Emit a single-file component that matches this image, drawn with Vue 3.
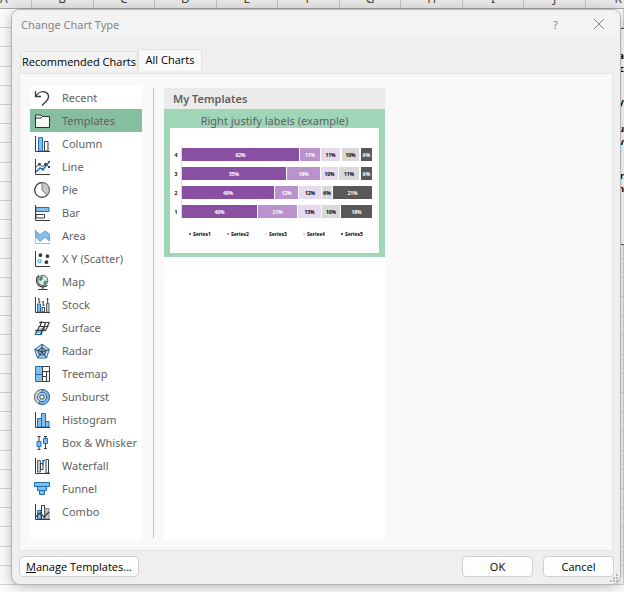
<script setup>
import { ref } from 'vue'

const K = '#3b3b3b'
const B = '#1f6fb5'
const L = '#83beec'
const G = '#c8c8c8'
const axis = { d: 'M1.5 0V15.5H16', s: K }

const types = [
  { name: 'Recent', shapes: [{ d: 'M1.5 1V6.5H7M1.8 6.2C4 2.5 8 .8 11.5 2.2C15.5 4 15.3 8.4 12.5 11L8 15.5', s: K, w: 1.3 }] },
  { name: 'Templates', shapes: [{ d: 'M1.5 2H7L8.5 3.5H15.5V14.5H1.5Z', s: '#2f2f2f', f: '#f5faf7' }, { d: 'M1.5 5H7L8.5 3.5', s: '#2f2f2f' }] },
  { name: 'Column', shapes: [{ d: 'M4.5 1.5H8.5V15H4.5Z', s: B, f: L }, { d: 'M10.5 5.5H14V15H10.5Z', s: K, f: '#fff' }, axis] },
  { name: 'Line', shapes: [{ d: 'M2 8L5.5 5L8.5 8L11.5 5L15 8', s: K }, { d: 'M2 13L6 9L9 10.5L15 3', s: B, w: 1.5 }, { d: 'M4.3 4H6.7V6.4H4.3ZM10.3 4H12.7V6.4H10.3ZM14 7H16V9H14Z', f: K }, { d: 'M8 9.5H10V11.5H8ZM14 2H16V4H14Z', f: B }, axis] },
  { name: 'Pie', shapes: [{ d: 'M15.3 8A7.3 7.3 0 1 1 8 .7A7.3 7.3 0 0 1 15.3 8Z', s: K, f: '#fff', w: 1.3 }, { d: 'M8 .7A7.3 7.3 0 0 1 13.3 13.1L8 8Z', s: '#777', f: G }] },
  { name: 'Bar', shapes: [{ d: 'M2 2.5H15V6.5H2Z', s: B, f: L }, { d: 'M2 9.5H10.5V13H2Z', s: K, f: '#fff' }, axis] },
  { name: 'Area', shapes: [{ d: 'M1.5 1V15.5H16', s: '#bbb' }, { d: 'M2 3L6 7L11 3L15.5 6V13L11 9L6 13.5L2 9Z', s: '#5aa2dc', f: L }] },
  { name: 'X Y (Scatter)', shapes: [{ d: 'M4.5 4.2A1.9 1.9 0 1 0 8.3 4.2A1.9 1.9 0 1 0 4.5 4.2ZM11.5 5.2A1.9 1.9 0 1 0 15.3 5.2A1.9 1.9 0 1 0 11.5 5.2ZM10.5 11.2A1.9 1.9 0 1 0 14.3 11.2A1.9 1.9 0 1 0 10.5 11.2Z', f: K }, { d: 'M4 10.2A1.6 1.6 0 1 0 7.2 10.2A1.6 1.6 0 1 0 4 10.2Z', s: '#2e91d8', f: '#fff' }, axis] },
  { name: 'Map', shapes: [{ d: 'M13.8 6.5A5 5 0 1 1 8.8 1.5A5 5 0 0 1 13.8 6.5Z', s: '#555', f: '#dfe9e3' }, { d: 'M6 3L9 2.5L8.5 5.5L6.5 7L5 6ZM10 7L13 6.5L12 9.5L9.5 10.5Z', f: '#2c9a58' }, { d: 'M5 1.2C2 3 1.5 8.5 4.5 11.3C7 13.6 11 13.3 13.3 11M8.8 13V15.3M4 15.5H13.5', s: K, w: 1.2 }] },
  { name: 'Stock', shapes: [{ d: 'M3.5 7H6.5V15H3.5Z', s: B, f: L }, { d: 'M8 10.5H10.5V15H8Z', s: K, f: '#fff' }, { d: 'M12.5 6.5H15V15H12.5Z', s: '#666', f: G }, { d: 'M5 1V6M4 2H5M5 5H6.5M9.2 4V9M8.2 5H9.2M9.2 8H10.5M13.7 1V6M12.7 2H13.7', s: K }, axis] },
  { name: 'Surface', shapes: [{ d: 'M2 10L7 8L11 10L8 14L2 13Z', f: L }, { d: 'M5 2.5H15.5M4.5 6.5H14.5M1 10.5H12M7.5 1L6 6.5M11.5 2L9.5 10M15.5 2L13 7M5.5 6L1 15M9.5 7L6.5 14.5M14 6L11 11', s: K, w: 1.2 }, { d: 'M1.5 14.5H8', s: B }] },
  { name: 'Radar', shapes: [{ d: 'M8 1L15.3 6.5L12.5 15H3.5L.7 6.5Z', s: B, f: '#b8dcf5' }, { d: 'M8 4.5L12 7.5L10.5 12H5.5L4 7.5Z', s: K, f: L }, { d: 'M8 8.8V1M8 8.8L15.3 6.5M8 8.8L12.5 15M8 8.8L3.5 15M8 8.8L.7 6.5', s: K }] },
  { name: 'Treemap', shapes: [{ d: 'M1.5 .5H8.5V15.5H1.5Z', s: B, f: L }, { d: 'M1.5 8.5H8.5', s: B }, { d: 'M8.5 .5H15.5V15.5H8.5ZM8.5 5.5H15.5M12.5 5.5V15.5M8.5 10.5H12.5', s: K }] },
  { name: 'Sunburst', shapes: [{ d: 'M15.5 8A7.5 7.5 0 1 1 8 .5A7.5 7.5 0 0 1 15.5 8Z', s: '#555', f: '#ddd' }, { d: 'M8 .5A7.5 7.5 0 1 1 5 14.9L8 8Z', s: B, f: L }, { d: 'M12.7 8A4.7 4.7 0 1 1 8 3.3A4.7 4.7 0 0 1 12.7 8Z', s: '#2d5f8c', f: '#b8dcf5' }, { d: 'M10.2 8A2.2 2.2 0 1 1 8 5.8A2.2 2.2 0 0 1 10.2 8Z', s: K, f: '#fff' }] },
  { name: 'Histogram', shapes: [{ d: 'M3.5 6.5H7.5V15H3.5ZM7.5 1.5H11.5V15H7.5ZM11.5 9.5H15V15H11.5Z', s: B, f: L }, axis] },
  { name: 'Box & Whisker', shapes: [{ d: 'M3.5 1.5H6.5M5 1.5V14.5M3.5 14.5H6.5M10 1.5H13M11.5 1.5V13.5M10 13.5H13', s: K }, { d: 'M3 6.5H7V11.5H3ZM9.5 3.5H13.5V8.5H9.5Z', s: B, f: L }] },
  { name: 'Waterfall', shapes: [{ d: 'M3.5 2.5H6.5V14H3.5Z', s: '#666', f: G }, { d: 'M6.5 5.5H9V11.5H6.5Z', s: K, f: '#fff' }, { d: 'M9 7.5V2.5H11', s: B, w: 1.4 }, { d: 'M12 1.5H14.5V15H12Z', s: K, f: '#fff' }, axis] },
  { name: 'Funnel', shapes: [{ d: 'M.5 1.5H15.5V5.5H.5ZM3.5 5.5H12.5V9.5H3.5ZM5.5 9.5H10.5V13.5H5.5Z', s: B, f: L }] },
  { name: 'Combo', shapes: [{ d: 'M3.5 6.5H7V15H3.5Z', s: B, f: L }, { d: 'M7.5 1.5H10.5V15H7.5Z', s: K, f: '#fff' }, { d: 'M11 4.5H15V15H11Z', s: '#888', f: G }, { d: 'M2 13L6 9L10 13L15 8', s: K, w: 1.3 }, axis] }
]
const selected = ref('Templates')

const fills = ['#884fa2', '#ba92cc', '#e8daee', '#d9d9d9', '#595959']
const inks = ['#fff', '#fff', '#000', '#000', '#fff']
const rows = [
  { n: 4, x: [12, 130, 151, 172, 191], e: [129, 150, 170, 189, 202], v: [62, 11, 11, 10, 6] },
  { n: 3, x: [12, 117, 151, 169, 191], e: [116, 150, 168, 189, 202], v: [55, 18, 10, 11, 6] },
  { n: 2, x: [12, 105, 129, 152, 163], e: [104, 128, 151, 162, 202], v: [49, 12, 12, 6, 21] },
  { n: 1, x: [12, 88, 128, 152, 171], e: [87, 127, 151, 170, 202], v: [40, 21, 13, 10, 18] }
]

const columns = ['A', 'B', 'C', 'D', 'E', 'F', 'G', 'H', 'I', 'J', 'K']
const notes = [
  { t: 'a', y: 49 }, { t: 'c', y: 62 }, { t: 'y', y: 95 }, { t: 'u', y: 122 },
  { t: 'v', y: 135 }, { t: 'r', y: 169 }, { t: 'n', y: 182 }
]
</script>

<template>
  <div class="screen">
    <div class="sheet" aria-hidden="true">
      <div class="heads">
        <span v-for="c in columns" :key="c"><b>{{ c }}</b></span>
      </div>
      <div class="cells">
        <div v-for="r in 30" :key="r" class="row"><i v-for="c in columns" :key="c"></i></div>
      </div>
      <div class="note">
        <span v-for="n in notes" :key="n.y" :style="{ top: n.y - 28 + 'px' }">{{ n.t }}</span>
      </div>
    </div>

    <section class="dialog" role="dialog" aria-labelledby="title">
      <header class="titlebar">
        <h1 id="title">Change Chart Type</h1>
        <button class="tool" type="button">?</button>
        <button class="tool" type="button" aria-label="Close">
          <svg width="12" height="12" viewBox="0 0 12 12"><path d="M1 1L11 11M11 1L1 11" stroke="#858585" fill="none" /></svg>
        </button>
      </header>

      <div class="tabs" role="tablist">
        <button class="tab" type="button" role="tab" aria-selected="false">Recommended Charts</button>
        <button class="tab active" type="button" role="tab" aria-selected="true">All Charts</button>
      </div>

      <main class="panel">
        <nav class="types">
          <button
            v-for="t in types"
            :key="t.name"
            type="button"
            class="type"
            :class="{ selected: selected === t.name }"
            @click="selected = t.name"
          >
            <svg width="16" height="16" viewBox="0 0 16 16">
              <path
                v-for="(p, i) in t.shapes"
                :key="i"
                :d="p.d"
                :fill="p.f || 'none'"
                :stroke="p.s || 'none'"
                :stroke-width="p.w || 1"
              />
            </svg>
            <span>{{ t.name }}</span>
          </button>
        </nav>
        <div class="divider"></div>
        <section class="gallery">
          <h2>My Templates</h2>
          <button class="card" type="button">
            <span class="caption">Right justify labels (example)</span>
            <svg class="chart" viewBox="0 0 209 125">
              <rect width="209" height="125" fill="#fff" />
              <path d="M11.5 18V91" stroke="#d9d9d9" />
              <g v-for="(r, i) in rows" :key="r.n">
                <text x="6" :y="29 + i * 19" fill="#000">{{ r.n }}</text>
                <g v-for="(v, j) in r.v" :key="j">
                  <rect :x="r.x[j]" :y="20 + i * 19" :width="r.e[j] - r.x[j]" height="13" :fill="fills[j]" />
                  <text :x="(r.x[j] + r.e[j]) / 2" :y="29 + i * 19" :fill="inks[j]">{{ v }}%</text>
                </g>
              </g>
              <g v-for="(f, j) in fills" :key="f">
                <rect :x="19 + j * 38" y="105" width="2" height="2" :fill="f" />
                <text class="key" :x="23 + j * 38" y="108" fill="#000">Series{{ j + 1 }}</text>
              </g>
            </svg>
          </button>
        </section>
      </main>

      <footer class="actions">
        <button class="push manage" type="button"><u>M</u>anage Templates...</button>
        <button class="push" type="button">OK</button>
        <button class="push" type="button">Cancel</button>
      </footer>
      <svg class="grip" width="9" height="9" viewBox="0 0 9 9">
        <path d="M6 0h2v2h-2zM3 3h2v2h-2zM6 3h2v2h-2zM0 6h2v2h-2zM3 6h2v2h-2zM6 6h2v2h-2z" fill="#b5b5b5" />
      </svg>
    </section>
  </div>
</template>

<style>
body {
  margin: 0;
}
</style>

<style scoped>
* {
  box-sizing: border-box;
}
.screen {
  position: relative;
  display: flex;
  min-height: 100vh;
  padding: 10px 4px 8px 12px;
  overflow: hidden;
  font-family: "Noto Sans", "Open Sans", sans-serif;
  font-size: 11px;
  color: #000;
}
button {
  font: inherit;
  color: inherit;
  padding: 0;
  margin: 0;
  border: 0;
  background: none;
}
.sheet {
  position: absolute;
  inset: 0;
  display: flex;
  flex-direction: column;
  background: #fcfcfc;
}
.heads,
.row {
  display: grid;
  grid-template-columns: 32px repeat(9, 1fr) 38px;
}
.heads {
  height: 9px;
  overflow: hidden;
  background: #e9e9e9;
  border-bottom: 1px solid #a6a6a6;
}
.heads span {
  display: flex;
  justify-content: center;
  align-items: flex-end;
  height: 8px;
  border-right: 1px solid #c4c4c4;
}
.heads span:first-child {
  justify-content: flex-start;
}
.heads span:last-child {
  justify-content: flex-end;
  padding-right: 2px;
  border-right: 0;
}
.heads b {
  font-weight: 400;
  font-size: 12px;
  line-height: 14px;
  margin-bottom: 2px;
  color: #444;
}
.cells {
  flex: 1;
  display: flex;
  flex-direction: column;
  padding-bottom: 7px;
}
.row {
  flex: 1;
  border-bottom: 1px solid #d4d4d4;
}
.row i {
  border-right: 1px solid #d4d4d4;
}
.note {
  position: absolute;
  top: 28px;
  right: 0;
  width: 4px;
  height: 217px;
  overflow: hidden;
  background: #fff;
  border: solid #555;
  border-width: 1px 0;
  font-size: 9px;
  line-height: 12px;
  font-weight: 700;
}
.note span {
  position: absolute;
  right: 0;
}
.dialog {
  position: relative;
  flex: 1;
  display: flex;
  flex-direction: column;
  background: #efefef;
  border-radius: 8px;
  box-shadow: 0 0 0 1px #b4b4b4, 0 2px 14px rgba(0, 0, 0, 0.3);
}
.titlebar {
  display: flex;
  align-items: center;
  height: 28px;
  padding: 0 7px 0 9px;
  background: #f3f3f3;
  border-radius: 8px 8px 0 0;
  color: #858585;
}
h1 {
  flex: 1;
  margin: 0;
  font-size: 11px;
  font-weight: 400;
}
.tool {
  display: flex;
  justify-content: center;
  align-items: center;
  width: 43px;
  height: 28px;
}
.tool:first-of-type {
  padding-left: 14px;
}
.tool:last-child {
  padding-left: 14px;
}
.tabs {
  display: flex;
  align-items: flex-end;
  padding: 11px 8px 0;
}
.tabs,
.actions {
  font-family: "Open Sans", "Noto Sans", sans-serif;
}
.tab {
  width: 118px;
  height: 20px;
  border: 1px solid #e2e2e2;
  border-bottom: 0;
  background: #f2f2f2;
  white-space: nowrap;
}
.tab.active {
  width: 64px;
  height: 22px;
  padding-bottom: 2px;
  background: #f9f9f9;
}
.panel {
  flex: 1;
  display: flex;
  margin: 2px 7px 0;
  padding: 12px 10px 10px;
  background: #f9f9f9;
  border: 1px solid #e4e4e4;
}
.types {
  width: 112px;
  background: #fff;
  color: #5f5f5f;
}
.type {
  display: flex;
  align-items: center;
  gap: 12px;
  width: 100%;
  height: 23px;
  padding-left: 4px;
  text-align: left;
  white-space: nowrap;
}
.type svg {
  flex: none;
}
.type.selected {
  background: #86bf9f;
}
.divider {
  width: 1px;
  margin: 2px 10px 2px 11px;
  background: #c3c3c3;
}
.gallery {
  width: 221px;
  margin-top: 2px;
  background: #fff;
}
h2 {
  margin: 0;
  height: 21px;
  padding-left: 9px;
  background: #ebebeb;
  font-size: 11px;
  line-height: 21px;
  font-weight: 600;
  color: #5f5f5f;
}
.card {
  display: block;
  width: 100%;
  padding: 0 6px 4px;
  background: #9fd6b8;
  color: #5f5f5f;
}
.caption {
  display: block;
  height: 19px;
  line-height: 23px;
}
.chart {
  display: block;
  width: 100%;
}
.chart text {
  font-size: 5px;
  font-weight: 700;
  text-anchor: middle;
}
.chart .key {
  text-anchor: start;
}
.actions {
  display: flex;
  gap: 10px;
  padding: 5px 6px 7px 7px;
}
.push {
  width: 71px;
  height: 21px;
  background: #fdfdfd;
  border: 1px solid #d0d0d0;
  border-radius: 4px;
}
.manage {
  width: 120px;
  margin-right: auto;
}
.grip {
  position: absolute;
  right: 1px;
  bottom: 1px;
}
</style>
